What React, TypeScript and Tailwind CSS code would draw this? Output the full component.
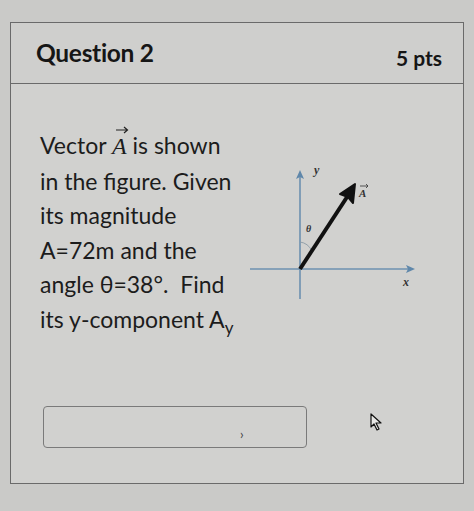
import React from "react";

const lato = { fontFamily: "Lato, 'Open Sans', sans-serif" };

function Figure() {
  return (
    <svg width="175" height="150" viewBox="0 0 175 150" className="block">
      {/* y axis */}
      <line x1="54" y1="140" x2="54" y2="16" stroke="#6c90b0" strokeWidth="1.6" />
      <path d="M50,20 L54,11 L58,20 L54,18 Z" fill="#5f87aa" />
      {/* x axis */}
      <line x1="4" y1="110" x2="164" y2="110" stroke="#6c90b0" strokeWidth="1.6" />
      <path d="M160,106 L169,110 L160,114 L162,110 Z" fill="#5f87aa" />
      {/* angle arc */}
      <path d="M54,83 Q62,84 66,92" fill="none" stroke="#8a9aa6" strokeWidth="0.9" />
      {/* vector */}
      <line x1="54" y1="110" x2="103" y2="35" stroke="#111" strokeWidth="4" />
      <path d="M109,25 L107,44 L102,38 L94,35 Z" fill="#111" stroke="#111" strokeWidth="2" strokeLinejoin="round" />
      {/* labels */}
      <text x="68" y="15" fontFamily="'Liberation Serif', serif" fontStyle="italic" fontWeight="bold" fontSize="12" fill="#333">y</text>
      <text x="113" y="38" fontFamily="'Liberation Serif', serif" fontStyle="italic" fontWeight="bold" fontSize="11" fill="#333">A</text>
      <path d="M114,27 L122,27 M120,25 L122,27 L120,29" stroke="#333" strokeWidth="0.8" fill="none" />
      <text x="60" y="73" fontFamily="'Liberation Serif', serif" fontStyle="italic" fontWeight="bold" fontSize="10" fill="#333">θ</text>
      <text x="157" y="127" fontFamily="'Liberation Serif', serif" fontStyle="italic" fontWeight="bold" fontSize="12" fill="#333">x</text>
    </svg>
  );
}

function Cursor() {
  return (
    <svg width="14" height="18" viewBox="0 0 14 18" className="absolute left-[370px] top-[413px]">
      <path d="M1,1 L1,14 L4,11 L7,17 L9,16 L6,10 L11,10 Z" fill="#e8e8e6" stroke="#111" strokeWidth="1.2" strokeLinejoin="round" />
    </svg>
  );
}

export default function App() {
  return (
    <div className="relative w-[474px] h-[511px] bg-[#cacac8] overflow-hidden pt-[22px] pl-[10px]" style={lato}>
      <div className="w-[454px] h-[462px] border-[1.5px] border-[#6a6a6a] bg-[#d1d1cf] flex flex-col">
        <div className="h-[61px] flex items-center justify-between pl-[25px] pr-[21px] border-b-[1.5px] border-[#6a6a6a] bg-[#cfcfcd]">
          <span className="text-[24.5px] font-bold text-[#161616] tracking-[-0.3px]">Question 2</span>
          <span className="text-[21px] font-bold text-[#161616] pt-[9px]">5 pts</span>
        </div>
        <div className="flex flex-col pl-[29px] pt-[44px]">
          <div className="flex">
            <div className="w-[206px] text-[23px] leading-[34.6px] text-[#1c1c1c]">
              <div className="whitespace-nowrap">
                Vector{" "}
                <span className="relative inline-block">
                  <span className="italic text-[24px]" style={{ fontFamily: "'Liberation Serif', serif" }}>A</span>
                  <svg width="14" height="8" viewBox="0 0 14 8" className="absolute left-[3px] top-[-2px]">
                    <path d="M1,4 L12,4 M9,1 L12.5,4 L9,7" stroke="#222" strokeWidth="1.2" fill="none" />
                  </svg>
                </span>{" "}
                is shown
              </div>
              <div className="whitespace-nowrap">in the figure. Given</div>
              <div className="whitespace-nowrap">its magnitude</div>
              <div className="whitespace-nowrap">A=72m and the</div>
              <div className="whitespace-nowrap">angle θ=38°.&nbsp; Find</div>
              <div className="whitespace-nowrap">
                its y-component A<span className="text-[17px] relative top-[6px]">y</span>
              </div>
            </div>
            <div className="mt-[31px]">
              <Figure />
            </div>
          </div>
          <div className="mt-[66px] ml-[3px] w-[264px] h-[42px] border-[1.5px] border-[#7a7a7a] rounded-[4px] relative">
            <span className="absolute left-[196px] top-[18px] text-[13px] text-[#444]">›</span>
          </div>
        </div>
      </div>
      <Cursor />
    </div>
  );
}
